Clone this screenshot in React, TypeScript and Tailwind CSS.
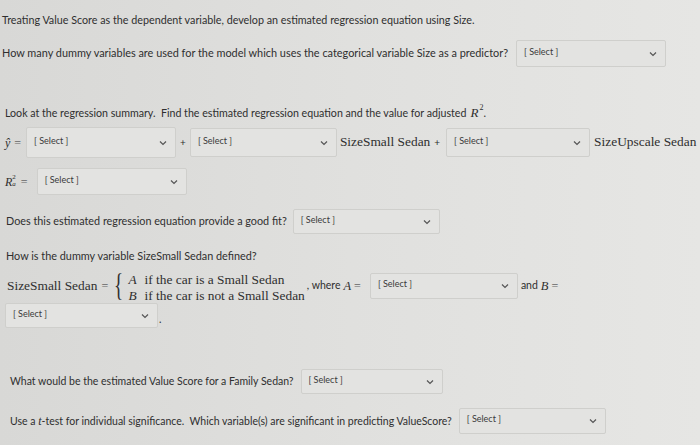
import React from "react";

const Chevron = () => (
  <svg width="8" height="6" viewBox="0 0 8 6" className="shrink-0">
    <polyline points="1,1.5 4,4.5 7,1.5" fill="none" stroke="#555" strokeWidth="1.2" />
  </svg>
);

const Sel = ({ w, h, extra = "" }: { w: number; h: number; extra?: string }) => (
  <div
    className={`flex items-center justify-between border border-[#cfcfcc] bg-[#e3e3e1] pl-[7px] pr-[8px] rounded-[2px] shrink-0 ${extra}`}
    style={{ width: w, height: h }}
  >
    <span className="text-[9px] text-[#3a3a3a] -mt-[4px] font-['Lato',sans-serif] tracking-normal">[ Select ]</span>
    <Chevron />
  </div>
);

const serif = "font-['Liberation_Serif',serif]";

export default function App() {
  return (
    <div className="w-[700px] h-[445px] overflow-hidden bg-linear-to-r from-[#d8d8d6] via-[#e0e0de] to-[#e6e6e4] text-[#2f2f2f] font-['Lato',sans-serif] text-[10.5px]">
      <div className="pt-[12px]">
        <div className="h-[16px] flex items-center pl-[2px] text-[10.75px] whitespace-nowrap">
          Treating Value Score as the dependent variable, develop an estimated regression equation using Size.
        </div>
        <div className="mt-[12px] h-[27px] flex items-center pl-[2px] text-[10.9px]">
          <span className="whitespace-nowrap">How many dummy variables are used for the model which uses the categorical variable Size as a predictor?</span>
          <Sel w={150} h={27} extra="ml-[8px]" />
        </div>
        <div className="mt-[38px] h-[16px] flex items-center pl-[5px] text-[10.65px]">
          <span className="whitespace-nowrap">Look at the regression summary.&nbsp; Find the estimated regression equation and the value for adjusted</span>
          <span className={`${serif} italic text-[13px] ml-[4px]`}>R</span>
          <span className={`${serif} text-[8px] relative -top-[5px] ml-[1px]`}>2</span>
          <span>.</span>
        </div>
        <div className="mt-[6px] h-[31px] flex items-center pl-[5px]">
          <span className={`${serif} italic text-[12px]`}>ŷ</span>
          <span className={`${serif} text-[12px] ml-[4px] text-[#666]`}>=</span>
          <Sel w={150} h={31} extra="ml-[5px]" />
          <span className="text-[10px] mx-[4px]">+</span>
          <Sel w={147} h={29} />
          <span className={`${serif} text-[13.4px] ml-[3px] whitespace-nowrap`}>SizeSmall Sedan</span>
          <span className="text-[10px] ml-[4px] mr-[6px]">+</span>
          <Sel w={144} h={29} />
          <span className={`${serif} text-[13.4px] ml-[4px] whitespace-nowrap`}>SizeUpscale Sedan</span>
        </div>
        <div className="mt-[10px] h-[27px] flex items-center pl-[5px]">
          <span className={`${serif} italic text-[12px]`}>R</span>
          <span className="flex flex-col leading-[7px] -mt-[2px]">
            <span className={`${serif} text-[7px]`}>2</span>
            <span className={`${serif} italic text-[7px]`}>a</span>
          </span>
          <span className={`${serif} text-[12px] ml-[5px] text-[#666]`}>=</span>
          <Sel w={150} h={27} extra="ml-[9px]" />
        </div>
        <div className="mt-[14px] h-[25px] flex items-center pl-[6px] text-[10.8px]">
          <span className="whitespace-nowrap">Does this estimated regression equation provide a good fit?</span>
          <Sel w={147} h={25} extra="ml-[6px]" />
        </div>
        <div className="mt-[14px] h-[16px] flex items-center pl-[6px] text-[10.85px]">
          How is the dummy variable SizeSmall Sedan defined?
        </div>
        <div className="mt-[9px] h-[26px] flex items-center pl-[7px]">
          <span className={`${serif} text-[13.4px] whitespace-nowrap`}>SizeSmall Sedan</span>
          <span className={`${serif} text-[12px] ml-[4px] text-[#666]`}>=</span>
          <span className={`${serif} text-[32px] font-light leading-none ml-[3px] -mt-[3px] scale-x-[0.6]`}>{"{"}</span>
          <div className={`${serif} text-[13.4px] leading-[16px] flex flex-col mt-[3px] ml-[2px]`}>
            <div className="flex whitespace-nowrap"><span className="italic w-[16px]">A</span><span>if the car is a Small Sedan</span></div>
            <div className="flex whitespace-nowrap"><span className="italic w-[16px]">B</span><span>if the car is not a Small Sedan</span></div>
          </div>
          <span className="ml-[2px] mr-[3px] text-[10.5px] whitespace-nowrap">, where</span>
          <span className={`${serif} italic text-[12.5px]`}>A</span>
          <span className={`${serif} text-[12px] ml-[3px] text-[#666]`}>=</span>
          <Sel w={148} h={26} extra="ml-[9px]" />
          <span className="ml-[3px] text-[10.5px]">and</span>
          <span className={`${serif} italic text-[12.5px] ml-[3px]`}>B</span>
          <span className={`${serif} text-[12px] ml-[3px] text-[#666]`}>=</span>
        </div>
        <div className="mt-[4px] h-[25px] flex items-center pl-[5px]">
          <Sel w={153} h={25} />
          <span className="ml-[1px] mt-[8px]">.</span>
        </div>
        <div className="mt-[41px] h-[25px] flex items-center pl-[10px]">
          <span className="whitespace-nowrap">What would be the estimated Value Score for a Family Sedan?</span>
          <Sel w={142} h={25} extra="ml-[7px]" />
        </div>
        <div className="mt-[14px] h-[26px] flex items-center pl-[10px]">
          <span className="whitespace-nowrap">
            Use a <span className={`${serif} italic text-[12px]`}>t</span>-test for individual significance.&nbsp; Which variable(s) are significant in predicting ValueScore?
          </span>
          <Sel w={147} h={26} extra="ml-[7px]" />
        </div>
      </div>
    </div>
  );
}
